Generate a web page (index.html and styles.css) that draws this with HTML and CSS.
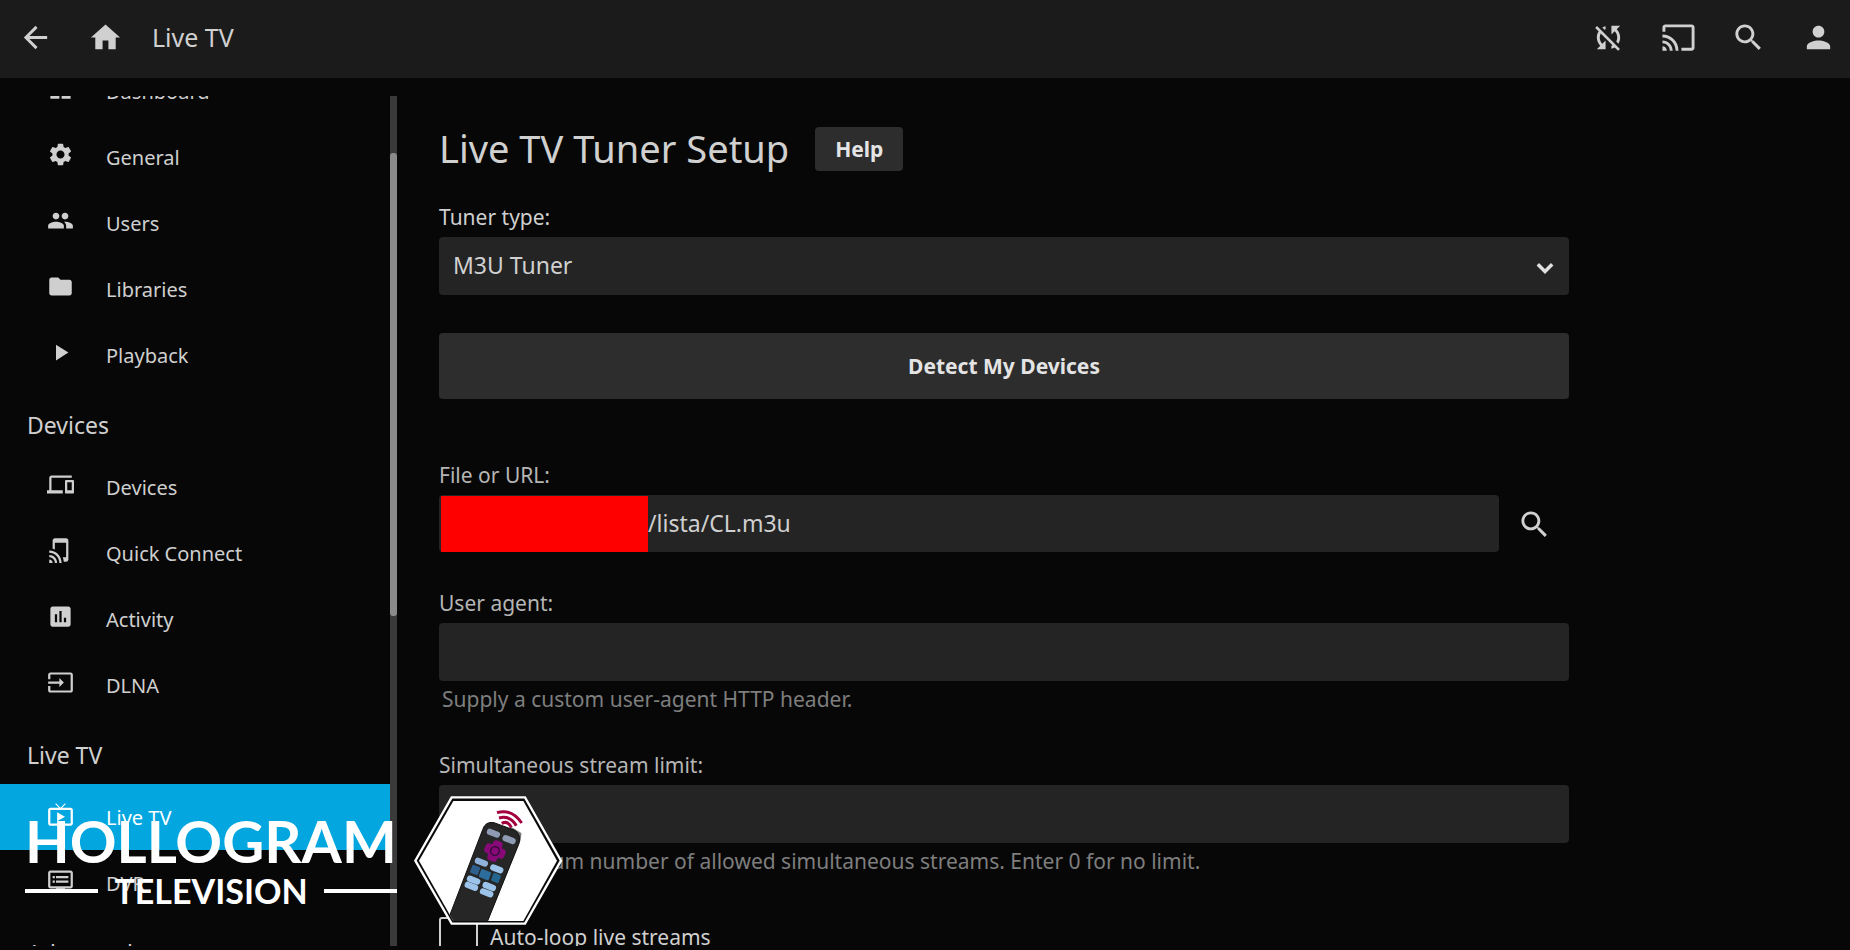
FILE: index.html
```html
<!DOCTYPE html>
<html lang="en">
<head>
  <title>Live TV</title>
  <meta charset="UTF-8">
  <meta name="viewport" content="width=device-width, initial-scale=1.0">
  <link rel="stylesheet" href="styles.css">
</head>
<body>
  <header class="header">
    <button class="icon-button" type="button" aria-label="Back">
      <svg class="icon" viewBox="0 0 24 24"><path d="M20 11H7.83l5.59-5.59L12 4l-8 8 8 8 1.41-1.41L7.83 13H20v-2z"/></svg>
    </button>
    <button class="icon-button" type="button" aria-label="Home">
      <svg class="icon" viewBox="0 0 24 24"><path d="M10 20v-6h4v6h5v-8h3L12 3 2 12h3v8z"/></svg>
    </button>
    <h3 class="page-title">Live TV</h3>
    <div class="header-right">
      <button class="icon-button" type="button" aria-label="SyncPlay">
        <svg class="icon" viewBox="0 0 24 24"><path d="M10 6.35V4.26c-.8.21-1.55.54-2.23.96l1.46 1.46c.25-.12.5-.24.77-.33zm-7.14-.94l2.36 2.36C4.45 8.99 4 10.44 4 12c0 2.21.91 4.2 2.36 5.64L4 20h6v-6l-2.24 2.24C6.68 15.15 6 13.66 6 12c0-1 .25-1.94.68-2.77l8.08 8.08c-.25.13-.5.25-.77.34v2.09c.8-.21 1.55-.54 2.23-.96l2.36 2.36 1.27-1.27L4.14 4.14 2.86 5.41zM20 4h-6v6l2.24-2.24C17.32 8.85 18 10.34 18 12c0 1-.25 1.94-.68 2.77l1.46 1.46C19.55 15.01 20 13.56 20 12c0-2.21-.91-4.2-2.36-5.64L20 4z"/></svg>
      </button>
      <button class="icon-button" type="button" aria-label="Cast">
        <svg class="icon" viewBox="0 0 24 24"><path d="M21 3H3c-1.1 0-2 .9-2 2v3h2V5h18v14h-7v2h7c1.1 0 2-.9 2-2V5c0-1.1-.9-2-2-2zM1 18v3h3c0-1.66-1.34-3-3-3zm0-4v2c2.76 0 5 2.24 5 5h2c0-3.87-3.13-7-7-7zm0-4v2c4.97 0 9 4.03 9 9h2c0-6.08-4.93-11-11-11z"/></svg>
      </button>
      <button class="icon-button" type="button" aria-label="Search">
        <svg class="icon" viewBox="0 0 24 24"><path d="M15.5 14h-.79l-.28-.27C15.41 12.59 16 11.11 16 9.5 16 5.91 13.09 3 9.5 3S3 5.91 3 9.5 5.91 16 9.5 16c1.61 0 3.09-.59 4.23-1.57l.27.28v.79l5 4.99L20.49 19l-4.99-5zm-6 0C7.01 14 5 11.99 5 9.5S7.01 5 9.5 5 14 7.01 14 9.5 11.99 14 9.5 14z"/></svg>
      </button>
      <button class="icon-button" type="button" aria-label="User">
        <svg class="icon" viewBox="0 0 24 24"><path d="M12 12c2.21 0 4-1.79 4-4s-1.79-4-4-4-4 1.79-4 4 1.79 4 4 4zm0 2c-2.67 0-8 1.34-8 4v2h16v-2c0-2.66-5.33-4-8-4z"/></svg>
      </button>
    </div>
  </header>

  <div class="layout">
    <aside class="sidebar">
      <nav class="menu">
        <a class="menu-item" href="#dashboard">
          <svg class="menu-icon" viewBox="0 0 24 24"><path d="M3 13h8V3H3v10zm0 8h8v-6H3v6zm10 0h8V11h-8v10zm0-18v6h8V3h-8z"/></svg>
          <span>Dashboard</span>
        </a>
        <a class="menu-item" href="#general">
          <svg class="menu-icon" viewBox="0 0 24 24"><path d="M19.14 12.94c.04-.3.06-.61.06-.94 0-.32-.02-.64-.07-.94l2.03-1.58c.18-.14.23-.41.12-.61l-1.92-3.32c-.12-.22-.37-.29-.59-.22l-2.39.96c-.5-.38-1.03-.7-1.62-.94l-.36-2.54c-.04-.24-.24-.41-.48-.41h-3.84c-.24 0-.43.17-.47.41l-.36 2.54c-.59.24-1.13.57-1.62.94l-2.39-.96c-.22-.08-.47 0-.59.22L2.74 8.87c-.12.21-.08.47.12.61l2.03 1.58c-.05.3-.09.63-.09.94s.02.64.07.94l-2.03 1.58c-.18.14-.23.41-.12.61l1.92 3.32c.12.22.37.29.59.22l2.39-.96c.5.38 1.03.7 1.62.94l.36 2.54c.05.24.24.41.48.41h3.84c.24 0 .44-.17.47-.41l.36-2.54c.59-.24 1.13-.56 1.62-.94l2.39.96c.22.08.47 0 .59-.22l1.92-3.32c.12-.22.07-.47-.12-.61l-2.01-1.58zM12 15.6c-1.98 0-3.6-1.62-3.6-3.6s1.62-3.6 3.6-3.6 3.6 1.62 3.6 3.6-1.62 3.6-3.6 3.6z"/></svg>
          <span>General</span>
        </a>
        <a class="menu-item" href="#users">
          <svg class="menu-icon" viewBox="0 0 24 24"><path d="M16 11c1.66 0 2.99-1.34 2.99-3S17.66 5 16 5c-1.66 0-3 1.34-3 3s1.34 3 3 3zm-8 0c1.66 0 2.99-1.34 2.99-3S9.66 5 8 5C6.34 5 5 6.34 5 8s1.34 3 3 3zm0 2c-2.33 0-7 1.17-7 3.5V19h14v-2.5c0-2.33-4.67-3.5-7-3.5zm8 0c-.29 0-.62.02-.97.05 1.16.84 1.97 1.97 1.97 3.45V19h6v-2.5c0-2.33-4.67-3.5-7-3.5z"/></svg>
          <span>Users</span>
        </a>
        <a class="menu-item" href="#libraries">
          <svg class="menu-icon" viewBox="0 0 24 24"><path d="M10 4H4c-1.1 0-1.99.9-1.99 2L2 18c0 1.1.9 2 2 2h16c1.1 0 2-.9 2-2V8c0-1.1-.9-2-2-2h-8l-2-2z"/></svg>
          <span>Libraries</span>
        </a>
        <a class="menu-item" href="#playback">
          <svg class="menu-icon" viewBox="0 0 24 24"><path d="M8 5v14l11-7z"/></svg>
          <span>Playback</span>
        </a>

        <h3 class="menu-heading">Devices</h3>
        <a class="menu-item" href="#devices">
          <svg class="menu-icon" viewBox="0 0 24 24"><path d="M4 6h18V4H4c-1.1 0-2 .9-2 2v11H0v3h14v-3H4V6zm19 2h-6c-.55 0-1 .45-1 1v10c0 .55.45 1 1 1h6c.55 0 1-.45 1-1V9c0-.55-.45-1-1-1zm-1 9h-4v-7h4v7z"/></svg>
          <span>Devices</span>
        </a>
        <a class="menu-item" href="#quickconnect">
          <svg class="menu-icon" viewBox="0 0 24 24"><path d="M2 16v2c2.76 0 5 2.24 5 5h2c0-3.87-3.13-7-7-7zm0 4v3h3c0-1.66-1.34-3-3-3zm0-8v2c4.97 0 9 4.03 9 9h2c0-6.08-4.92-11-11-11zM17 1.01L7 1c-1.1 0-2 .9-2 2v7.37c.69.16 1.36.37 2 .64V5h10v13h-3.03c.52 1.25.84 2.59.95 4H17c1.1 0 2-.9 2-2V3c0-1.1-.9-1.99-2-1.99z"/></svg>
          <span>Quick Connect</span>
        </a>
        <a class="menu-item" href="#activity">
          <svg class="menu-icon" viewBox="0 0 24 24"><path d="M19 3H5c-1.1 0-2 .9-2 2v14c0 1.1.9 2 2 2h14c1.1 0 2-.9 2-2V5c0-1.1-.9-2-2-2zM9 17H7v-7h2v7zm4 0h-2V7h2v10zm4 0h-2v-4h2v4z"/></svg>
          <span>Activity</span>
        </a>
        <a class="menu-item" href="#dlna">
          <svg class="menu-icon" viewBox="0 0 24 24"><path d="M21 3.01H3c-1.1 0-2 .9-2 2V9h2V4.99h18v14.03H3V15H1v4.01c0 1.1.9 1.98 2 1.98h18c1.1 0 2-.88 2-1.98v-14c0-1.11-.9-2-2-2zM11 16l4-4-4-4v3H1v2h10v3z"/></svg>
          <span>DLNA</span>
        </a>

        <h3 class="menu-heading">Live TV</h3>
        <a class="menu-item selected" href="#livetv">
          <svg class="menu-icon" viewBox="0 0 24 24"><path d="M21 6h-7.59l3.29-3.29L16 2l-4 4-4-4-.7.71L10.59 6H3c-1.1 0-2 .89-2 2v12c0 1.1.9 2 2 2h18c1.1 0 2-.9 2-2V8c0-1.11-.9-2-2-2zm0 14H3V8h18v12zM9 10v8l7-4z"/></svg>
          <span>Live TV</span>
        </a>
        <a class="menu-item" href="#dvr">
          <svg class="menu-icon" viewBox="0 0 24 24"><path d="M21 3H3c-1.1 0-2 .9-2 2v12c0 1.1.9 2 2 2h5v2h8v-2h5c1.1 0 1.99-.9 1.99-2L23 5c0-1.1-.9-2-2-2zm0 14H3V5h18v12zm-2-9H8v2h11V8zm0 4H8v2h11v-2zM7 8H5v2h2V8zm0 4H5v2h2v-2z"/></svg>
          <span>DVR</span>
        </a>

        <h3 class="menu-heading">Advanced</h3>
      </nav>
      <div class="scroll-track"><div class="scroll-thumb"></div></div>
    </aside>

    <main class="content">
      <form class="tuner-form">
        <div class="title-row">
          <h1 class="form-title">Live TV Tuner Setup</h1>
          <button class="help-button" type="button">Help</button>
        </div>

        <div class="field">
          <label class="label label-light" for="tuner-type">Tuner type:</label>
          <div class="select-box">
            <select class="input" id="tuner-type">
              <option value="m3u">M3U Tuner</option>
              <option value="hdhomerun">HDHomeRun</option>
            </select>
            <svg class="select-arrow" viewBox="0 0 24 24"><path d="M6.6 10l5.4 5.4 5.4-5.4"/></svg>
          </div>
        </div>

        <button class="detect-button" type="button">Detect My Devices</button>

        <div class="field field-path">
          <label class="label" for="file-path">File or URL:</label>
          <div class="path-row">
            <div class="path-box">
              <span class="redacted"></span>
              <input class="path-input" type="text" id="file-path" value="/lista/CL.m3u">
            </div>
            <button class="icon-button" type="button" aria-label="Browse">
              <svg class="icon" viewBox="0 0 24 24"><path d="M15.5 14h-.79l-.28-.27C15.41 12.59 16 11.11 16 9.5 16 5.91 13.09 3 9.5 3S3 5.91 3 9.5 5.91 16 9.5 16c1.61 0 3.09-.59 4.23-1.57l.27.28v.79l5 4.99L20.49 19l-4.99-5zm-6 0C7.01 14 5 11.99 5 9.5S7.01 5 9.5 5 14 7.01 14 9.5 11.99 14 9.5 14z"/></svg>
            </button>
          </div>
        </div>

        <div class="field">
          <label class="label" for="user-agent">User agent:</label>
          <input class="input" type="text" id="user-agent">
          <p class="description">Supply a custom user-agent HTTP header.</p>
        </div>

        <div class="field">
          <label class="label" for="stream-limit">Simultaneous stream limit:</label>
          <input class="input" type="text" id="stream-limit">
          <p class="description">The maximum number of allowed simultaneous streams. Enter 0 for no limit.</p>
        </div>

        <label class="checkbox-row" for="auto-loop">
          <input class="checkbox" type="checkbox" id="auto-loop">
          <span>Auto-loop live streams</span>
        </label>
      </form>
    </main>
  </div>

  <!-- channel watermark -->
  <div class="watermark">
    <div class="brand">
      <div class="brand-name">HOLLOGRAM</div>
      <div class="brand-sub">TELEVISION</div>
    </div>
    <svg class="brand-badge" viewBox="0 0 480 420">
      <defs>
        <clipPath id="hex"><path d="M130 36H340L441 215 340 396H130L27 215z"/></clipPath>
      </defs>
      <path d="M125 25H345L453 215 345 404H125L16 215z" fill="#0b0b0b" stroke="#fff" stroke-width="7"/>
      <path d="M130 36H340L441 215 340 396H130L27 215z" fill="#fff"/>
      <g clip-path="url(#hex)">
        <path d="M232 400L326 170Q335 150 334 132L300 112 224 400z" fill="#777"/>
        <path d="M112 398L218 122Q226 96 252 101L312 123Q334 134 327 162L232 398z" fill="#262626" stroke="#111" stroke-width="3"/>
        <g fill="none" stroke="#a3003f" stroke-width="9">
          <path d="M261 71Q305 58 335 102"/>
          <path d="M267 87Q300 78 319 110"/>
          <path d="M275 103Q294 94 304 115"/>
        </g>
        <g fill="#8f9bb3">
          <rect x="230" y="123" width="41" height="19" rx="9" transform="rotate(21 250 132)"/>
          <rect x="277" y="142" width="41" height="19" rx="9" transform="rotate(21 297 151)"/>
        </g>
        <g transform="rotate(22 255 186)" fill="#870a78">
          <rect x="240" y="154" width="30" height="64" rx="10"/>
          <rect x="223" y="171" width="64" height="30" rx="10"/>
          <circle cx="255" cy="186" r="22"/>
          <circle cx="255" cy="186" r="13" fill="none" stroke="#2b0a33" stroke-width="4"/>
        </g>
        <g fill="#9cc4ea">
          <rect x="194" y="210" width="41" height="19" rx="9" transform="rotate(21 214 219)" fill="#8fb0d8"/>
          <rect x="240" y="230" width="41" height="19" rx="9" transform="rotate(21 260 239)"/>
          <rect x="170" y="264" width="42" height="19" rx="9" transform="rotate(21 191 273)"/>
          <rect x="163" y="282" width="42" height="19" rx="9" transform="rotate(21 183 292)"/>
          <rect x="217" y="283" width="42" height="19" rx="9" transform="rotate(21 238 292)"/>
          <rect x="209" y="302" width="42" height="19" rx="9" transform="rotate(21 230 311)"/>
        </g>
        <g>
          <rect x="183" y="230" width="25" height="26" rx="4" transform="rotate(21 195 243)" fill="#2f5f8c"/>
          <rect x="209" y="244" width="32" height="26" rx="4" transform="rotate(21 225 257)" fill="#2c6d9c"/>
          <rect x="246" y="254" width="24" height="26" rx="4" transform="rotate(21 258 267)" fill="#23658d"/>
        </g>
      </g>
    </svg>
  </div>
</body>
</html>
```

FILE: styles.css
```css
* {
  box-sizing: border-box;
}

body {
  display: flex;
  flex-direction: column;
  height: 100vh;
  margin: 0;
  padding-bottom: 4px;
  overflow: hidden;
  background-color: #070707;
  color: #d0d0d0;
  font-family: "Noto Sans", sans-serif;
}

h1, h3, p {
  margin: 0;
  font-weight: 400;
}

button, input, select {
  font-family: inherit;
  color: inherit;
}

/* header */
.header {
  display: flex;
  align-items: center;
  gap: 12px;
  flex: none;
  height: 78px;
  padding: 0 3px 4px 6px;
  background-color: #1b1b1b;
}

.header-right {
  display: flex;
  gap: 12px;
  margin-left: auto;
}

.page-title {
  padding-left: 6px;
  font-size: 25px;
}

.icon-button {
  display: flex;
  align-items: center;
  justify-content: center;
  width: 58px;
  height: 58px;
  padding: 0;
  border: none;
  background: none;
  cursor: pointer;
}

.icon {
  width: 35px;
  height: 35px;
  fill: currentColor;
}

/* layout */
.layout {
  display: flex;
  flex: 1;
  min-height: 0;
  padding-top: 18px;
}

.sidebar {
  display: flex;
  flex: none;
  width: 397px;
  overflow: hidden;
}

.menu {
  flex: 1;
  margin-top: -38px;
}

.menu-item {
  display: flex;
  align-items: center;
  gap: 32px;
  height: 66px;
  padding-left: 47px;
  color: #cfcfcf;
  font-size: 20px;
  text-decoration: none;
}

.menu-item.selected {
  background-color: #03a6de;
  color: #fff;
}

.menu-icon {
  width: 27px;
  height: 27px;
  margin-bottom: 6px;
  fill: currentColor;
}

.menu-heading {
  height: 66px;
  padding: 5px 0 0 27px;
  font-size: 23px;
  line-height: 64px;
}

.scroll-track {
  width: 7px;
  background-color: #3a3a3a;
}

.scroll-thumb {
  height: 463px;
  margin-top: 57px;
  border-radius: 3px;
  background-color: #8a8a8a;
}

.content {
  flex: 1;
  min-width: 0;
  padding: 31px 42px 0;
  overflow: hidden;
}

.tuner-form {
  max-width: 1130px;
}

/* form */
.title-row {
  display: flex;
  align-items: center;
  gap: 26px;
  height: 44px;
}

.form-title {
  font-size: 38px;
  line-height: 44px;
  padding-bottom: 2px;
}

.help-button,
.detect-button {
  border: none;
  border-radius: 4px;
  background-color: #2d2d2d;
  color: #e4e4e4;
  font-size: 21px;
  font-weight: 700;
  cursor: pointer;
}

.help-button {
  height: 44px;
  padding: 0 20px;
}

.detect-button {
  width: 100%;
  height: 66px;
  margin-top: 38px;
}

.field {
  margin-top: 32px;
}

.field-path {
  margin-top: 62px;
  margin-bottom: 36px;
}

.label {
  display: block;
  height: 34px;
  color: #b5b5b5;
  font-size: 21px;
  line-height: 28px;
}

.label-light {
  color: #cfcfcf;
}

.input {
  display: block;
  width: 100%;
  height: 58px;
  padding: 0 14px 2px;
  border: none;
  border-radius: 4px;
  background-color: #242424;
  font-size: 23px;
}

.select-box {
  position: relative;
}

select.input {
  appearance: none;
}

.select-arrow {
  position: absolute;
  top: 14px;
  right: 8px;
  width: 32px;
  height: 32px;
  fill: none;
  stroke: #e0e0e0;
  stroke-width: 2.6;
  pointer-events: none;
}

.path-row {
  display: flex;
  align-items: flex-start;
  gap: 6px;
  padding-right: 6px;
}

.path-box {
  display: flex;
  flex: 1;
  height: 57px;
  padding: 1px 0 0 2px;
  border-radius: 4px;
  background-color: #242424;
}

.redacted {
  width: 207px;
  background-color: #ff0000;
}

.path-input {
  flex: 1;
  min-width: 0;
  padding: 0 0 2px;
  border: none;
  background: none;
  font-size: 23px;
}

.description {
  height: 38px;
  padding-left: 3px;
  color: #7e7e7e;
  font-size: 21px;
  line-height: 36px;
}

.checkbox-row {
  display: flex;
  align-items: center;
  gap: 12px;
  margin-top: 36px;
  font-size: 21px;
}

.checkbox {
  appearance: none;
  width: 39px;
  height: 39px;
  margin: 0;
  border: 2px solid #d0d0d0;
  border-radius: 3px;
}

/* watermark */
.watermark {
  position: absolute;
  left: 25px;
  bottom: 21px;
  display: flex;
  align-items: flex-end;
  gap: 13px;
  pointer-events: none;
}

.brand {
  width: 372px;
  padding-bottom: 20px;
  color: #fff;
  font-family: Lato, sans-serif;
}

.brand-name {
  margin-bottom: 2px;
  font-size: 58px;
  font-weight: 700;
  line-height: 60px;
}

.brand-sub {
  display: flex;
  align-items: center;
  gap: 16px;
  font-size: 34px;
  font-weight: 700;
  line-height: 36px;
}

.brand-sub::before,
.brand-sub::after {
  content: "";
  flex: 1;
  height: 4px;
  background-color: #fff;
}

.brand-badge {
  width: 160px;
  height: 140px;
}
```
